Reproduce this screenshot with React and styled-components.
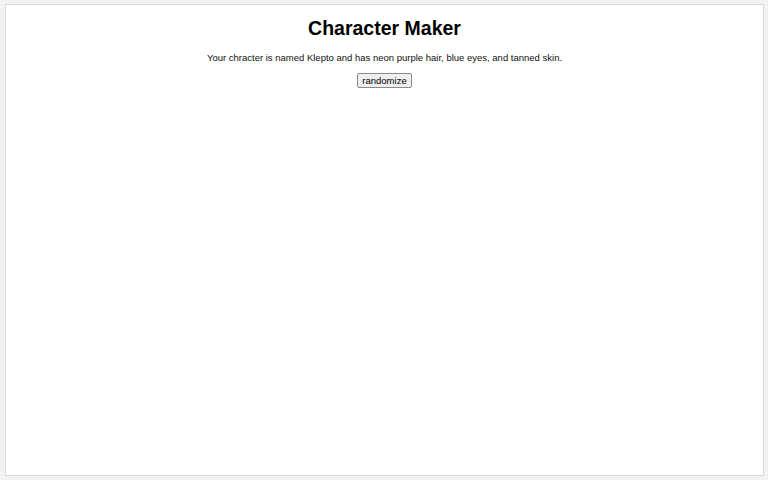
import styled, { createGlobalStyle } from "styled-components";

const GlobalStyle = createGlobalStyle`
  html, body {
    margin: 0;
    padding: 0;
    height: 100%;
    background: #f2f2f2;
    font-family: "Liberation Sans", Arial, sans-serif;
  }
  #root {
    height: 100%;
  }
`;

const character = {
  name: "Klepto",
  hair: "neon purple",
  eyes: "blue",
  skin: "tanned",
};

export default function App() {
  return (
    <>
      <GlobalStyle />
      <Page>
        <Card>
          <Title>Character Maker</Title>
          <Description>
            Your chracter is named {character.name} and has {character.hair} hair,{" "}
            {character.eyes} eyes, and {character.skin} skin.
          </Description>
          <RandomButton>randomize</RandomButton>
        </Card>
      </Page>
    </>
  );
}

const Page = styled.div`
  height: 100%;
  padding: 4px 4px 4px 5px;
  box-sizing: border-box;
  display: flex;
`;

const Card = styled.div`
  flex: 1;
  background: #fff;
  border: 1px solid #dadada;
  display: flex;
  flex-direction: column;
  align-items: center;
  padding-top: 12px;
`;

const Title = styled.h1`
  margin: 0;
  font-size: 19.5px;
  line-height: 22px;
  font-weight: 700;
  color: #000;
`;

const Description = styled.p`
  margin: 13px 0 10px;
  font-size: 9.5px;
  line-height: 11px;
  color: #111;
`;

const RandomButton = styled.button`
  font-family: "Liberation Sans", Arial, sans-serif;
  font-size: 9.5px;
  line-height: 11px;
  padding: 1px 4px;
  background: #efefef;
  border: 1px solid #8a8a8a;
  border-radius: 2px;
  color: #000;
`;
